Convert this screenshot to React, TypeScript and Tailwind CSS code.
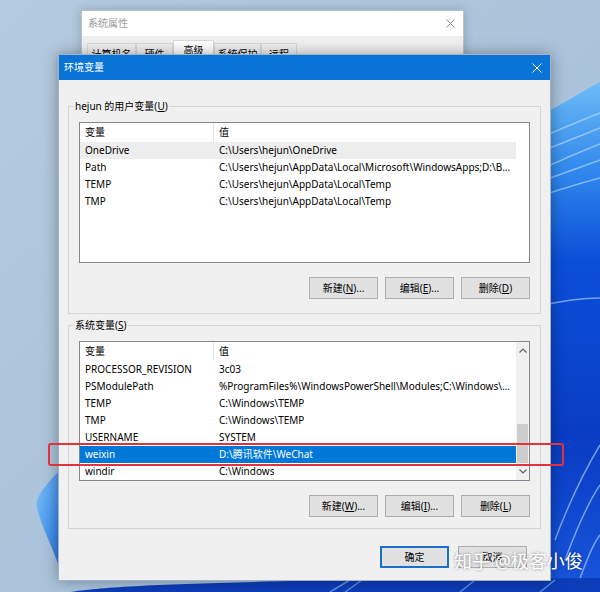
import React from "react";

type Row = { name: string; value: string };

const userRows: Row[] = [
  { name: "OneDrive", value: "C:\\Users\\hejun\\OneDrive" },
  { name: "Path", value: "C:\\Users\\hejun\\AppData\\Local\\Microsoft\\WindowsApps;D:\\B..." },
  { name: "TEMP", value: "C:\\Users\\hejun\\AppData\\Local\\Temp" },
  { name: "TMP", value: "C:\\Users\\hejun\\AppData\\Local\\Temp" },
];

const systemRows: Row[] = [
  { name: "PROCESSOR_REVISION", value: "3c03" },
  { name: "PSModulePath", value: "%ProgramFiles%\\WindowsPowerShell\\Modules;C:\\Windows\\..." },
  { name: "TEMP", value: "C:\\Windows\\TEMP" },
  { name: "TMP", value: "C:\\Windows\\TEMP" },
  { name: "USERNAME", value: "SYSTEM" },
  { name: "weixin", value: "D:\\腾讯软件\\WeChat" },
  { name: "windir", value: "C:\\Windows" },
];

const tabs = [
  { label: "计算机名", w: "w-[49px]" },
  { label: "硬件", w: "w-[37px]" },
  { label: "高级", w: "w-[41px]", active: true },
  { label: "系统保护", w: "w-[47px]" },
  { label: "远程", w: "w-[36px]" },
];

function CloseX({ className }: { className: string }) {
  return (
    <svg viewBox="0 0 10 10" className={className} fill="none" stroke="currentColor" strokeWidth="1">
      <path d="M0.5 0.5 L9.5 9.5 M9.5 0.5 L0.5 9.5" />
    </svg>
  );
}

function Chevron({ up }: { up?: boolean }) {
  return (
    <svg viewBox="0 0 8 5" className="h-[5px] w-[8px]" fill="none" stroke="#606060" strokeWidth="1.2">
      <path d={up ? "M0.5 4.5 L4 1 L7.5 4.5" : "M0.5 0.5 L4 4 L7.5 0.5"} />
    </svg>
  );
}

function Btn({ children, primary }: { children: React.ReactNode; primary?: boolean }) {
  return (
    <div
      className={
        "flex h-[22px] w-[69px] items-center justify-center bg-[#e1e1e1] text-[10px] text-black " +
        (primary ? "border-2 border-[#1a6fc9]" : "border border-[#adadad]")
      }
    >
      {children}
    </div>
  );
}

function ListView({
  rows,
  active,
  focused,
  scroll,
  className,
}: {
  rows: Row[];
  active: number;
  focused?: boolean;
  scroll?: boolean;
  className: string;
}) {
  return (
    <div className={"flex overflow-hidden border border-[#828790] bg-white text-[10px] text-black " + className}>
      <div className="flex w-[436px] flex-col">
        <div className="flex h-[19px] items-center">
          <div className="w-[133px] pl-[5px]">变量</div>
          <div className="h-full w-px bg-[#e5e5e5]" />
          <div className="pl-[5px]">值</div>
        </div>
        {rows.map((r, i) => (
          <div
            key={r.name}
            className={
              "flex h-[17px] items-center whitespace-nowrap " +
              (i === active ? (focused ? "bg-[#0078d7] text-white" : "bg-[#ededed]") : "")
            }
          >
            <div className="w-[134px] shrink-0 pl-[5px]">{r.name}</div>
            <div className="overflow-hidden pl-[5px]">{r.value}</div>
          </div>
        ))}
      </div>
      {scroll && (
        <div className="flex w-[13px] flex-col bg-[#f0f0f0]">
          <div className="flex h-[17px] items-center justify-center">
            <Chevron up />
          </div>
          <div className="flex-1" />
          <div className="mx-[1px] h-[39px] bg-[#cdcdcd]" />
          <div className="flex h-[17px] items-center justify-center">
            <Chevron />
          </div>
        </div>
      )}
    </div>
  );
}

function Background() {
  return (
    <svg className="absolute inset-0 h-full w-full" viewBox="0 0 600 592" preserveAspectRatio="none">
      <defs>
        <linearGradient id="bg" x1="0" y1="0" x2="1" y2="1">
          <stop offset="0" stopColor="#b4cade" />
          <stop offset="1" stopColor="#a2bed8" />
        </linearGradient>
        <linearGradient id="bloom" x1="0" y1="0" x2="0" y2="1">
          <stop offset="0" stopColor="#6cbcf6" />
          <stop offset="0.18" stopColor="#2f86ec" />
          <stop offset="0.35" stopColor="#0b4fd9" />
          <stop offset="0.7" stopColor="#0a3cc4" />
          <stop offset="1" stopColor="#1756dc" />
        </linearGradient>
        <linearGradient id="petal" x1="0" y1="0" x2="1" y2="1">
          <stop offset="0" stopColor="#7cc3f7" />
          <stop offset="1" stopColor="#1f6fe6" />
        </linearGradient>
      </defs>
      <rect width="600" height="592" fill="url(#bg)" />
      <path d="M530 122 C562 104 585 90 600 82 L600 592 L500 592 Z" fill="url(#bloom)" />
      <g fill="none" stroke="#cfe9ff" strokeOpacity="0.55" strokeWidth="1.5">
        <path d="M540 138 C565 127 585 119 600 113" />
        <path d="M540 152 C565 142 585 134 600 128" />
        <path d="M540 170 C565 158 585 150 600 144" />
        <path d="M540 182 C565 172 585 166 600 160" />
        <path d="M540 196 C565 188 585 182 600 178" />
        <path d="M540 306 C565 300 585 298 600 298" />
        <path d="M555 540 C570 500 585 470 600 445" />
        <path d="M565 560 C578 525 590 500 600 485" />
        <path d="M575 592 C585 565 592 545 600 535" />
      </g>
      <path d="M60 470 C46 484 34 498 37 508 C42 528 55 552 62 575 Z" fill="url(#petal)" />
      <path d="M70 592 C120 584 250 580 600 578 L600 592 Z" fill="#0c3cb8" />
      <g fill="none" stroke="#8fc8ff" strokeOpacity="0.6" strokeWidth="1.5">
        <path d="M330 592 L350 580" />
        <path d="M345 592 L362 580" />
        <path d="M460 592 L475 580" />
        <path d="M540 592 L555 580" />
      </g>
    </svg>
  );
}

export default function App() {
  return (
    <div className="relative h-[592px] w-[600px] overflow-hidden font-['Noto_Sans','Noto_Sans_CJK_SC',sans-serif] text-[10px]">
      <Background />

      {/* 系统属性 (behind) */}
      <div className="absolute left-[81px] top-[10px] flex h-[90px] w-[383px] flex-col border border-[#b9c3cc] bg-[#f0f0f0] shadow-[0_0_10px_rgba(0,0,0,0.2)]">
        <div className="flex h-[25px] items-center justify-between bg-white pl-[6px] pr-[8px] text-[#9a9a9a]">
          <span className="text-[10px]">系统属性</span>
          <CloseX className="h-[9px] w-[9px] text-[#808080]" />
        </div>
        <div className="flex items-start pl-[5px] pt-[6px]">
          {tabs.map((t) => (
            <div
              key={t.label}
              className={
                "flex justify-center border border-[#d9d9d9] text-[10px] leading-[14px] text-black " +
                t.w +
                (t.active ? " -mt-[2px] h-[22px] border-b-0 bg-white pt-[2px]" : " mt-[1px] h-[20px] bg-[#f0f0f0] pt-[3px]")
              }
            >
              {t.label}
            </div>
          ))}
        </div>
      </div>

      {/* 环境变量 */}
      <div className="absolute left-[58px] top-[54px] flex h-[527px] w-[493px] flex-col border border-[#9fb3c8] bg-[#f0f0f0] shadow-[0_0_14px_rgba(0,0,0,0.35)]">
        <div className="flex h-[25px] shrink-0 items-center justify-between bg-[#0a74d6] pl-[5px] pr-[8px] text-white">
          <span className="text-[10px]">环境变量</span>
          <CloseX className="h-[10px] w-[10px] text-white" />
        </div>

        <fieldset className="mx-[9px] mt-[18px] border border-[#d5d5d5] px-[10px] pb-[14px]">
          <legend className="-ml-[5px] px-px text-[10px] leading-[16px] text-black">
            hejun 的用户变量(<u>U</u>)
          </legend>
          <ListView rows={userRows} active={0} className="mt-[8px] h-[141px]" />
          <div className="mt-[14px] flex justify-end gap-[7px]">
            <Btn>新建(<u>N</u>)...</Btn>
            <Btn>编辑(<u>E</u>)...</Btn>
            <Btn>删除(<u>D</u>)</Btn>
          </div>
        </fieldset>

        <fieldset className="mx-[9px] mt-[3px] border border-[#d5d5d5] px-[10px] pb-[11px]">
          <legend className="-ml-[5px] px-px text-[10px] leading-[16px] text-black">
            系统变量(<u>S</u>)
          </legend>
          <ListView rows={systemRows} active={5} focused scroll className="mt-[8px] h-[140px]" />
          <div className="mt-[14px] flex justify-end gap-[7px]">
            <Btn>新建(<u>W</u>)...</Btn>
            <Btn>编辑(<u>I</u>)...</Btn>
            <Btn>删除(<u>L</u>)</Btn>
          </div>
        </fieldset>

        <div className="mr-[23px] mt-[17px] flex justify-end gap-[9px]">
          <Btn primary>确定</Btn>
          <Btn>取消</Btn>
        </div>
      </div>

      {/* annotation */}
      <div className="absolute left-[48px] top-[443px] h-[23px] w-[516px] rounded-[3px] border-2 border-[#e2333a]" />

      {/* watermark */}
      <div className="absolute left-[454px] top-[550px] whitespace-nowrap text-[18px] leading-[22px] text-white [text-shadow:0_0_3px_rgba(0,0,0,0.45)]">
        知乎 @极客小俊
      </div>
    </div>
  );
}
